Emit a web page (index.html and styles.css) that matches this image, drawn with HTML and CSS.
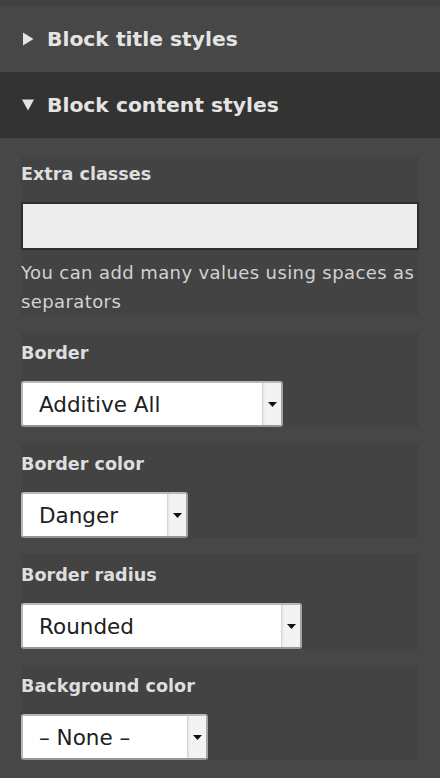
FILE: index.html
```html
<!DOCTYPE html>
<html lang="en">
<head>
<meta charset="utf-8">
<title>Block styles</title>
<link rel="stylesheet" href="styles.css">
</head>
<body>
<div class="topband"></div>
<div class="summary">
  <svg class="tri" width="12" height="14" viewBox="0 0 12 14"><polygon points="1,0.5 11.5,7 1,13.5" fill="#e4e4e4"/></svg>
  <span>Block title styles</span>
</div>
<div class="summary active">
  <svg class="tri" width="12" height="14" viewBox="0 0 12 14"><polygon points="0,1.5 12,1.5 6,12.5" fill="#e4e4e4"/></svg>
  <span>Block content styles</span>
</div>
<div class="content">
  <div class="item first">
    <div class="label">Extra classes</div>
    <div class="input"></div>
    <div class="help">You can add many values using spaces as separators</div>
  </div>
  <div class="item">
    <div class="label">Border</div>
    <div class="select w-border"><span class="value">Additive All</span><span class="arrow"><svg width="9" height="5" viewBox="0 0 9 5"><polygon points="0,0 9,0 4.5,5" fill="#111"/></svg></span></div>
  </div>
  <div class="item">
    <div class="label">Border color</div>
    <div class="select w-color"><span class="value">Danger</span><span class="arrow"><svg width="9" height="5" viewBox="0 0 9 5"><polygon points="0,0 9,0 4.5,5" fill="#111"/></svg></span></div>
  </div>
  <div class="item">
    <div class="label">Border radius</div>
    <div class="select w-radius"><span class="value">Rounded</span><span class="arrow"><svg width="9" height="5" viewBox="0 0 9 5"><polygon points="0,0 9,0 4.5,5" fill="#111"/></svg></span></div>
  </div>
  <div class="item">
    <div class="label">Background color</div>
    <div class="select w-bg"><span class="value">– None –</span><span class="arrow"><svg width="9" height="5" viewBox="0 0 9 5"><polygon points="0,0 9,0 4.5,5" fill="#111"/></svg></span></div>
  </div>
</div>
</body>
</html>
```

FILE: styles.css
```css
html, body {
  margin: 0;
  padding: 0;
}
body {
  background: #474747;
  font-family: "DejaVu Sans", "Liberation Sans", sans-serif;
  color: #e2e2e2;
  width: 440px;
  height: 778px;
  overflow: hidden;
}
.topband {
  height: 6px;
  background: #414141;
}
.summary {
  height: 66px;
  display: flex;
  align-items: center;
  padding-left: 22px;
  background: #474747;
  font-size: 20.3px;
  font-weight: bold;
  color: #e4e4e4;
}
.summary.active {
  background: #333333;
}
.summary .tri {
  margin-right: 13px;
  flex: none;
}
.content {
  padding: 18px 21px 0 21px;
  display: flex;
  flex-direction: column;
  gap: 16px;
}
.item {
  background: #434343;
  padding-top: 11px;
}
.item.first {
  padding-top: 8px;
}
.label {
  font-size: 17.6px;
  font-weight: bold;
  line-height: 20px;
  color: #dedede;
}
.input {
  margin-top: 18px;
  height: 44px;
  background: #ececec;
  border: 2px solid #2e2e2e;
}
.help {
  margin-top: 8px;
  font-size: 18px;
  line-height: 29px;
  letter-spacing: 0.4px;
  color: #d2d2d2;
}
.select {
  margin-top: 18px;
  height: 46px;
  box-sizing: border-box;
  display: flex;
  align-items: stretch;
  background: #ffffff;
  border: 2px solid #b8b8b8;
  border-bottom-color: #969696;
  border-right-color: #a4a4a4;
  border-radius: 3px;
}
.select .value {
  flex: 1;
  display: flex;
  align-items: center;
  padding-left: 16px;
  font-size: 21.5px;
  color: #202020;
  white-space: nowrap;
}
.select .arrow {
  width: 18px;
  flex: none;
  display: flex;
  align-items: center;
  justify-content: center;
  background: #f3f3f3;
  border-left: 1px solid #d6d6d6;
  box-shadow: inset 2px 0 2px -1px #e2e2e2;
}
.w-border { width: 262px; }
.w-color { width: 167px; }
.w-radius { width: 281px; }
.w-bg { width: 187px; }
```
